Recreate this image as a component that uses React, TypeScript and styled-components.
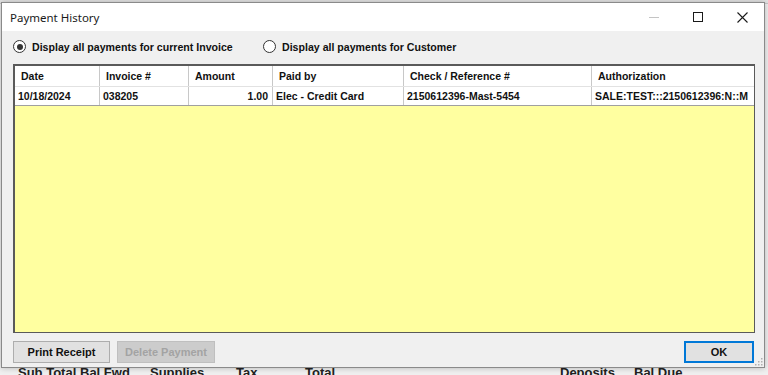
import { createGlobalStyle } from "styled-components";
import styled from "styled-components";

const Global = createGlobalStyle`
  html, body { margin: 0; padding: 0; }
  body {
    width: 768px;
    height: 375px;
    overflow: hidden;
    background: #f0f0f0;
    font-family: "Liberation Sans", Arial, sans-serif;
  }
`;

const Desk = styled.div`
  position: relative;
  width: 768px;
  height: 375px;
  overflow: hidden;
`;

const BackLabels = styled.div`
  position: absolute;
  left: 0;
  right: 0;
  top: 366px;
  height: 9px;
  overflow: hidden;
  font-size: 13px;
  line-height: 13px;
  font-weight: bold;
  color: #222;
`;

const BackLabel = styled.span<{ $x: number }>`
  position: absolute;
  left: ${({ $x }) => $x}px;
  top: 0;
  white-space: nowrap;
`;

const BackTop = styled.div`
  position: absolute;
  left: 0;
  right: 0;
  top: 0;
  height: 3px;
  background: #e4e4e4;
  border-bottom: 1px solid #c8c8c8;
`;

const Window = styled.div`
  position: absolute;
  left: 1px;
  top: 2px;
  width: 762px;
  height: 364px;
  border: 1px solid #8a8a8a;
  background: #f0f0f0;
  display: flex;
  flex-direction: column;
  box-shadow: 0 0 6px rgba(0, 0, 0, 0.25);
  z-index: 1;
`;

const TitleBar = styled.div`
  height: 28px;
  background: #ffffff;
  display: flex;
  align-items: center;
  padding-left: 8px;
`;

const Title = styled.span`
  flex: 1;
  font-family: "Noto Sans", "Open Sans", sans-serif;
  font-size: 11.5px;
  color: #1a1a1a;
`;

const Caption = styled.button<{ $dim?: boolean }>`
  width: 44px;
  height: 28px;
  border: none;
  background: transparent;
  padding: 0;
  display: flex;
  align-items: center;
  justify-content: center;
  color: ${({ $dim }) => ($dim ? "#c4c4c4" : "#1a1a1a")};
`;

const Body = styled.div`
  flex: 1;
  display: flex;
  flex-direction: column;
  padding: 7px 7px 0 11px;
  position: relative;
`;

const RadioRow = styled.div`
  display: flex;
  align-items: center;
  height: 17px;
`;

const RadioItem = styled.label<{ $w: number }>`
  display: flex;
  align-items: center;
  width: ${({ $w }) => $w}px;
  gap: 6px;
  font-size: 10.6px;
  font-weight: bold;
  color: #111;
`;

const RadioCircle = styled.span<{ $on?: boolean }>`
  width: 11px;
  height: 11px;
  border: 1px solid #333;
  border-radius: 50%;
  background: #fff;
  display: flex;
  align-items: center;
  justify-content: center;
  &::after {
    content: "";
    width: 6px;
    height: 6px;
    border-radius: 50%;
    background: ${({ $on }) => ($on ? "#333" : "transparent")};
  }
`;

const Grid = styled.div`
  margin-top: 9px;
  width: 739px;
  height: 266px;
  border-top: 2px solid #5a5a5a;
  border-left: 2px solid #5a5a5a;
  border-right: 1px solid #5a5a5a;
  border-bottom: 1px solid #5a5a5a;
  background: #ffffa0;
  display: flex;
  flex-direction: column;
`;

const Row = styled.div<{ $head?: boolean }>`
  display: grid;
  grid-template-columns: 85px 89px 84px 131px 188px 1fr;
  height: ${({ $head }) => ($head ? 20 : 18)}px;
  background: #ffffff;
  border-bottom: 1px solid ${({ $head }) => ($head ? "#e2e2e2" : "#a0a0a0")};
`;

const Cell = styled.div<{ $right?: boolean; $pad?: number }>`
  display: flex;
  align-items: center;
  justify-content: ${({ $right }) => ($right ? "flex-end" : "flex-start")};
  padding: 0 ${({ $right }) => ($right ? 4 : 0)}px 0 ${({ $pad }) => $pad ?? 3}px;
  border-right: 1px solid #c8c8c8;
  font-size: 10.5px;
  font-weight: bold;
  color: #111;
  white-space: nowrap;
  overflow: hidden;
  &:last-child { border-right: none; }
`;

const Footer = styled.div`
  display: flex;
  align-items: center;
  margin-top: 8px;
  padding-right: 3px;
  gap: 7px;
`;

const Btn = styled.button<{ $w: number; $disabled?: boolean; $default?: boolean }>`
  width: ${({ $w }) => $w}px;
  height: 22px;
  margin: 0;
  padding: 0;
  font-family: "Liberation Sans", Arial, sans-serif;
  font-size: 11px;
  font-weight: bold;
  color: ${({ $disabled }) => ($disabled ? "#a3a3a3" : "#111")};
  background: ${({ $disabled }) => ($disabled ? "#cccccc" : "#e1e1e1")};
  border: ${({ $disabled, $default }) =>
    $default ? "2px solid #0078d7" : $disabled ? "1px solid #bfbfbf" : "1px solid #adadad"};
`;

const Spacer = styled.div`
  flex: 1;
`;

const Grip = styled.svg`
  position: absolute;
  right: 1px;
  bottom: 1px;
`;

const columns = ["Date", "Invoice #", "Amount", "Paid by", "Check / Reference #", "Authorization"];

export default function App() {
  return (
    <Desk>
      <Global />
      <BackTop />
      <BackLabels>
        <BackLabel $x={18}>Sub Total</BackLabel>
        <BackLabel $x={80}>Bal Fwd</BackLabel>
        <BackLabel $x={150}>Supplies</BackLabel>
        <BackLabel $x={236}>Tax</BackLabel>
        <BackLabel $x={305}>Total</BackLabel>
        <BackLabel $x={560}>Deposits</BackLabel>
        <BackLabel $x={634}>Bal Due</BackLabel>
      </BackLabels>
      <Window>
        <TitleBar>
          <Title>Payment History</Title>
          <Caption $dim aria-label="Minimize">
            <svg width="10" height="10" viewBox="0 0 10 10">
              <line x1="0" y1="5.5" x2="10" y2="5.5" stroke="currentColor" strokeWidth="1" />
            </svg>
          </Caption>
          <Caption aria-label="Maximize">
            <svg width="10" height="10" viewBox="0 0 10 10">
              <rect x="0.5" y="0.5" width="9" height="9" fill="none" stroke="currentColor" strokeWidth="1" />
            </svg>
          </Caption>
          <Caption aria-label="Close">
            <svg width="11" height="11" viewBox="0 0 11 11">
              <path d="M0.5 0.5 L10.5 10.5 M10.5 0.5 L0.5 10.5" stroke="currentColor" strokeWidth="1.1" />
            </svg>
          </Caption>
        </TitleBar>
        <Body>
          <RadioRow>
            <RadioItem $w={250}>
              <RadioCircle $on />
              Display all payments for current Invoice
            </RadioItem>
            <RadioItem $w={250}>
              <RadioCircle />
              Display all payments for Customer
            </RadioItem>
          </RadioRow>
          <Grid>
            <Row $head>
              {columns.map((c) => (
                <Cell key={c} $pad={6}>
                  {c}
                </Cell>
              ))}
            </Row>
            <Row>
              <Cell>10/18/2024</Cell>
              <Cell>038205</Cell>
              <Cell $right>1.00</Cell>
              <Cell>Elec - Credit Card</Cell>
              <Cell>2150612396-Mast-5454</Cell>
              <Cell>SALE:TEST:::2150612396:N::M</Cell>
            </Row>
          </Grid>
          <Footer>
            <Btn $w={97}>Print Receipt</Btn>
            <Btn $w={98} $disabled>
              Delete Payment
            </Btn>
            <Spacer />
            <Btn $w={70} $default>
              OK
            </Btn>
          </Footer>
          <Grip width="8" height="8" viewBox="0 0 8 8">
            <g fill="#b0b0b0">
              <rect x="6" y="0" width="1.5" height="1.5" />
              <rect x="3" y="3" width="1.5" height="1.5" />
              <rect x="6" y="3" width="1.5" height="1.5" />
              <rect x="0" y="6" width="1.5" height="1.5" />
              <rect x="3" y="6" width="1.5" height="1.5" />
              <rect x="6" y="6" width="1.5" height="1.5" />
            </g>
          </Grip>
        </Body>
      </Window>
    </Desk>
  );
}
